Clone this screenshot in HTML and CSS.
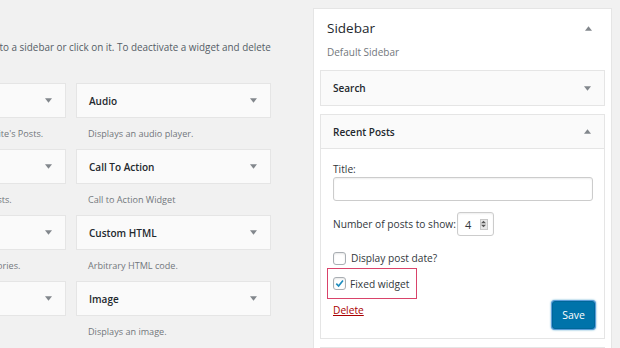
FILE: index.html
```html
<!DOCTYPE html>
<html lang="en">
<head>
  <meta charset="UTF-8">
  <title>Widgets</title>
  <link rel="stylesheet" href="styles.css">
</head>
<body>

<div class="screen">

  <!-- available widgets -->
  <div class="available">
    <p class="intro">To activate a widget drag it to a sidebar or click on it. To deactivate a widget and delete</p>

    <div class="widget-grid">
      <div class="widget">
        <div class="widget-top"><span class="widget-title">Archives</span><svg class="arrow" viewBox="0 0 8 5"><polygon points="0,0 8,0 4,5"/></svg></div>
        <div class="widget-desc">A monthly archive of your site's Posts.</div>
      </div>
      <div class="widget">
        <div class="widget-top"><span class="widget-title">Audio</span><svg class="arrow" viewBox="0 0 8 5"><polygon points="0,0 8,0 4,5"/></svg></div>
        <div class="widget-desc">Displays an audio player.</div>
      </div>
      <div class="widget">
        <div class="widget-top"><span class="widget-title">Calendar</span><svg class="arrow" viewBox="0 0 8 5"><polygon points="0,0 8,0 4,5"/></svg></div>
        <div class="widget-desc">A calendar of your site's Posts.</div>
      </div>
      <div class="widget">
        <div class="widget-top"><span class="widget-title">Call To Action</span><svg class="arrow" viewBox="0 0 8 5"><polygon points="0,0 8,0 4,5"/></svg></div>
        <div class="widget-desc">Call to Action Widget</div>
      </div>
      <div class="widget">
        <div class="widget-top"><span class="widget-title">Categories</span><svg class="arrow" viewBox="0 0 8 5"><polygon points="0,0 8,0 4,5"/></svg></div>
        <div class="widget-desc">A list or dropdown of categories.</div>
      </div>
      <div class="widget">
        <div class="widget-top"><span class="widget-title">Custom HTML</span><svg class="arrow" viewBox="0 0 8 5"><polygon points="0,0 8,0 4,5"/></svg></div>
        <div class="widget-desc">Arbitrary HTML code.</div>
      </div>
      <div class="widget">
        <div class="widget-top"><span class="widget-title">Gallery</span><svg class="arrow" viewBox="0 0 8 5"><polygon points="0,0 8,0 4,5"/></svg></div>
        <div class="widget-desc"></div>
      </div>
      <div class="widget">
        <div class="widget-top"><span class="widget-title">Image</span><svg class="arrow" viewBox="0 0 8 5"><polygon points="0,0 8,0 4,5"/></svg></div>
        <div class="widget-desc">Displays an image.</div>
      </div>
    </div>
  </div>

  <!-- sidebar -->
  <div class="sidebar">
    <div class="sidebar-head">
      <h2>Sidebar</h2>
      <svg class="arrow" viewBox="0 0 8 5"><polygon points="0,5 8,5 4,0"/></svg>
    </div>
    <p class="sidebar-desc">Default Sidebar</p>

    <div class="sb-widget">
      <div class="widget-top"><span class="widget-title">Search</span><svg class="arrow" viewBox="0 0 8 5"><polygon points="0,0 8,0 4,5"/></svg></div>
    </div>

    <div class="sb-widget open">
      <div class="widget-top"><span class="widget-title">Recent Posts</span><svg class="arrow" viewBox="0 0 8 5"><polygon points="0,5 8,5 4,0"/></svg></div>
      <div class="widget-inside">
        <label class="field-label">Title:</label>
        <input type="text" class="text-input">

        <div class="number-row">
          <span>Number of posts to show:</span>
          <div class="number-input">
            <span>4</span>
            <span class="spinner">
              <svg viewBox="0 0 6 9"><polygon points="0,3.5 6,3.5 3,0.5"/><polygon points="0,5.5 6,5.5 3,8.5"/></svg>
            </span>
          </div>
        </div>

        <div class="check-row">
          <span class="checkbox"></span>
          <span>Display post date?</span>
        </div>

        <div class="check-row highlight">
          <span class="checkbox">
            <svg viewBox="0 0 12 12"><path d="M2.5 6.2 L5 8.7 L9.8 2.8"/></svg>
          </span>
          <span>Fixed widget</span>
        </div>

        <div class="actions">
          <a class="delete">Delete</a>
          <button class="save">Save</button>
        </div>
      </div>
    </div>

    <div class="sb-widget">
      <div class="widget-top"></div>
    </div>
  </div>

</div>

</body>
</html>
```

FILE: styles.css
```css
* {
  box-sizing: border-box;
}
body {
  margin: 0;
  background: #f1f1f1;
  font-family: "Open Sans", "Noto Sans", sans-serif;
  font-size: 9.1px;
  color: #444;
  overflow: hidden;
}
.screen {
  display: flex;
  align-items: flex-start;
  width: 620px;
  height: 348px;
  overflow: hidden;
}

/* left side */
.available {
  flex: none;
  width: 400px;
  margin-left: -129px;
  padding-top: 40px;
}
.intro {
  margin: 0 0 0 3px;
  font-size: 9.9px;
  line-height: 14px;
  color: #555d66;
  white-space: nowrap;
}
.widget-grid {
  display: grid;
  grid-template-columns: 195px 195px;
  column-gap: 10px;
  margin-top: 29px;
}
.widget-top {
  height: 35px;
  background: #fafafa;
  border: 1px solid #e5e5e5;
  display: flex;
  align-items: center;
  justify-content: space-between;
  padding: 0 13px 0 12px;
}
.widget-title {
  font-size: 10px;
  font-weight: 600;
  color: #23282d;
}
.arrow {
  width: 7px;
  height: 5px;
  fill: #82878c;
}
.widget-desc {
  height: 31px;
  padding: 9px 12px 0;
  line-height: 14px;
  color: #72777c;
  white-space: nowrap;
}

/* sidebar panel */
.sidebar {
  flex: none;
  width: 299px;
  height: 345px;
  margin-left: 42px;
  margin-top: 8px;
  background: #fff;
  border: 1px solid #e5e5e5;
  padding: 0 6px;
}
.sidebar-head {
  display: flex;
  align-items: center;
  justify-content: space-between;
  padding: 9px 13px 0 7px;
}
.sidebar-head h2 {
  margin: 0;
  font-size: 13.5px;
  font-weight: 400;
  line-height: 20px;
  color: #23282d;
}
.sidebar-desc {
  margin: 7px 0 0 7px;
  line-height: 14px;
  font-size: 10px;
  color: #72777c;
}
.sb-widget {
  margin-top: 8px;
}
.sidebar-desc + .sb-widget {
  margin-top: 11px;
}
.sb-widget .widget-top {
  height: 36px;
}
.sb-widget.open .widget-top {
  height: 35px;
}
.widget-inside {
  border: 1px solid #e5e5e5;
  border-top: none;
  background: #fff;
  padding: 13px 10px 9px 12px;
  font-size: 10.2px;
  color: #32373c;
}
.field-label {
  display: block;
  line-height: 14px;
}
.text-input {
  display: block;
  width: 260px;
  height: 24px;
  margin: 1px 0 0;
  border: 1px solid #ccc;
  border-radius: 3px;
  box-shadow: inset 0 1px 2px rgba(0, 0, 0, 0.07);
  background: #fff;
}
.number-row {
  display: flex;
  align-items: center;
  gap: 1px;
  margin-top: 11px;
}
.number-input {
  width: 37px;
  height: 24px;
  border: 1px solid #ccc;
  border-radius: 3px;
  box-shadow: inset 0 1px 2px rgba(0, 0, 0, 0.07);
  display: flex;
  align-items: center;
  justify-content: space-between;
  padding: 0 5px 0 7px;
  font-size: 11px;
  color: #32373c;
}
.spinner {
  width: 8px;
  height: 11px;
  background: #e6e6e6;
  border: 1px solid #c8c8c8;
  display: flex;
  align-items: center;
  justify-content: center;
}
.spinner svg {
  width: 5px;
  height: 8px;
  fill: #555;
}
.check-row {
  display: flex;
  align-items: center;
  gap: 5px;
  margin-top: 14px;
  height: 16px;
  white-space: nowrap;
}
.checkbox {
  flex: none;
  width: 13px;
  height: 13px;
  border: 1px solid #a9aeb3;
  border-radius: 3px;
  background: #fff;
  box-shadow: inset 0 1px 2px rgba(0, 0, 0, 0.1);
  display: flex;
  align-items: center;
  justify-content: center;
}
.checkbox svg {
  width: 11px;
  height: 11px;
  fill: none;
  stroke: #1e8cbe;
  stroke-width: 1.8;
}
.check-row.highlight {
  width: 90px;
  height: 31px;
  gap: 4px;
  margin: 2px 0 0 -6px;
  padding: 0 5px;
  border: 1.5px solid #d9436a;
}
.actions {
  display: flex;
  justify-content: space-between;
  align-items: flex-start;
  margin-top: 2px;
}
.delete {
  margin-top: 2px;
  line-height: 14px;
  color: #a00;
  text-decoration: underline;
}
.save {
  width: 43px;
  height: 28px;
  margin-right: -1px;
  background: #0073aa;
  border: 1px solid #006799;
  border-radius: 3px;
  box-shadow: 0 0 0 1px #5b9dd9, 0 0 2px 1px rgba(30, 140, 190, 0.8);
  color: #fff;
  font-family: "Open Sans", "Noto Sans", sans-serif;
  font-size: 10.5px;
  padding: 0;
}
```
